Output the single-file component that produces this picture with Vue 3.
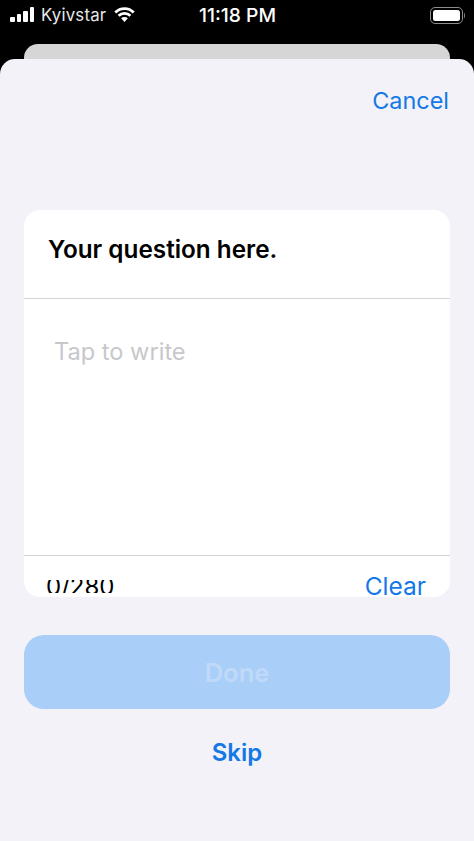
<script setup>
const bars = [5, 8, 11, 15]
</script>

<template>
  <div class="screen">
    <header class="status">
      <div class="status-left">
        <div class="signal">
          <span v-for="h in bars" :key="h" class="bar" :style="{ height: h + 'px' }"></span>
        </div>
        <span class="carrier">Kyivstar</span>
        <svg class="wifi" width="23" height="16" viewBox="0 0 22 16">
          <path d="M1.800 5.500A13 13 0 0 1 20.200 5.500" fill="none" stroke="#fff" stroke-width="2.800"/>
          <path d="M5.100 8.800A8.400 8.400 0 0 1 16.900 8.800" fill="none" stroke="#fff" stroke-width="2.800"/>
          <path d="M7.600 11.300A4.800 4.800 0 0 1 14.400 11.300L11 14.900z" fill="#fff"/>
        </svg>
      </div>
      <span class="time">11:18 PM</span>
      <div class="battery">
        <div class="battery-shell"><div class="battery-fill"></div></div>
        <div class="battery-cap"></div>
      </div>
    </header>

    <div class="back-card"></div>

    <main class="sheet">
      <div class="cancel-row"><span class="cancel">Cancel</span></div>
      <section class="card">
        <div class="question">Your question here.</div>
        <div class="write"><span class="placeholder">Tap to write</span></div>
        <div class="card-foot">
          <div class="count-clip"><span class="count">0/280</span></div>
          <span class="clear">Clear</span>
        </div>
      </section>
      <button class="done">Done</button>
      <div class="skip">Skip</div>
    </main>
  </div>
</template>

<style scoped>
.screen {
  width: 474px;
  height: 841px;
  background: #000;
  overflow: hidden;
  display: flex;
  flex-direction: column;
  font-family: Inter, "Liberation Sans", sans-serif;
}
.status {
  height: 30px;
  flex: none;
  display: grid;
  grid-template-columns: 1fr auto 1fr;
  align-items: center;
  padding: 0 9px 0 10px;
  color: #fff;
}
.status-left {
  display: flex;
  align-items: center;
}
.signal {
  display: flex;
  align-items: flex-end;
  gap: 2px;
  height: 15px;
  margin-bottom: 1px;
}
.bar {
  width: 4.500px;
  background: #fff;
  border-radius: 1px;
}
.carrier {
  font-size: 16.800px;
  margin-left: 7px;
  color: #e8e8e8;
  letter-spacing: 0.2px;
}
.wifi {
  margin-left: 7px;
}
.time {
  font-size: 19.300px;
  font-weight: 500;
}
.battery {
  justify-self: end;
  display: flex;
  align-items: center;
  gap: 1px;
}
.battery-shell {
  width: 33px;
  height: 17px;
  border: 1px solid #8c8c8c;
  border-radius: 5px;
  padding: 2px;
  box-sizing: border-box;
}
.battery-fill {
  height: 100%;
  background: #fff;
  border-radius: 2.500px;
}
.battery-cap {
  width: 1.500px;
  height: 5px;
  background: #777;
  border-radius: 0 1px 1px 0;
}
.back-card {
  flex: none;
  height: 30px;
  margin: 14px 24px 0;
  background: #d6d6d6;
  border-radius: 14px 14px 0 0;
}
.sheet {
  flex: 1;
  margin-top: -15px;
  background: #f2f2f8;
  border-radius: 15px 15px 0 0;
  padding: 0 24px;
  display: flex;
  flex-direction: column;
  position: relative;
}
.cancel-row {
  height: 151px;
  flex: none;
  padding: 26px 1px 0 0;
  box-sizing: border-box;
  display: flex;
  justify-content: flex-end;
}
.cancel {
  font-size: 23.400px;
  line-height: 32px;
  color: #1479e6;
}
.card {
  flex: none;
  height: 387px;
  background: #fff;
  border-radius: 16px;
  display: flex;
  flex-direction: column;
  overflow: hidden;
}
.question {
  height: 89px;
  flex: none;
  box-sizing: border-box;
  padding: 23px 24px 0;
  border-bottom: 1px solid #d4d4d6;
  font-size: 24.300px;
  line-height: 32px;
  font-weight: 600;
  color: #000;
}
.write {
  flex: none;
  height: 257px;
  box-sizing: border-box;
  padding: 37px 30px 0;
  border-bottom: 1px solid #d4d4d6;
}
.placeholder {
  font-size: 23.600px;
  line-height: 32px;
  color: #c7c7cc;
}
.card-foot {
  flex: 1;
  display: flex;
  justify-content: space-between;
  padding: 0 24px 0 22px;
  min-height: 0;
}
.count-clip {
  margin-top: 24px;
  height: 13px;
  overflow: hidden;
}
.count {
  display: block;
  font-size: 24px;
  line-height: 13px;
  font-weight: 400;
  color: #000;
}
.clear {
  font-size: 24.500px;
  line-height: 32px;
  margin-top: 14px;
  color: #1479e6;
}
.done {
  flex: none;
  margin-top: 38px;
  height: 74px;
  border: none;
  border-radius: 20px;
  background: #a9cef8;
  color: #c0d9f9;
  font-family: inherit;
  font-size: 25.500px;
  font-weight: 600;
}
.skip {
  margin-top: 28px;
  text-align: center;
  font-size: 24px;
  line-height: 32px;
  font-weight: 600;
  color: #1479e6;
}
</style>
